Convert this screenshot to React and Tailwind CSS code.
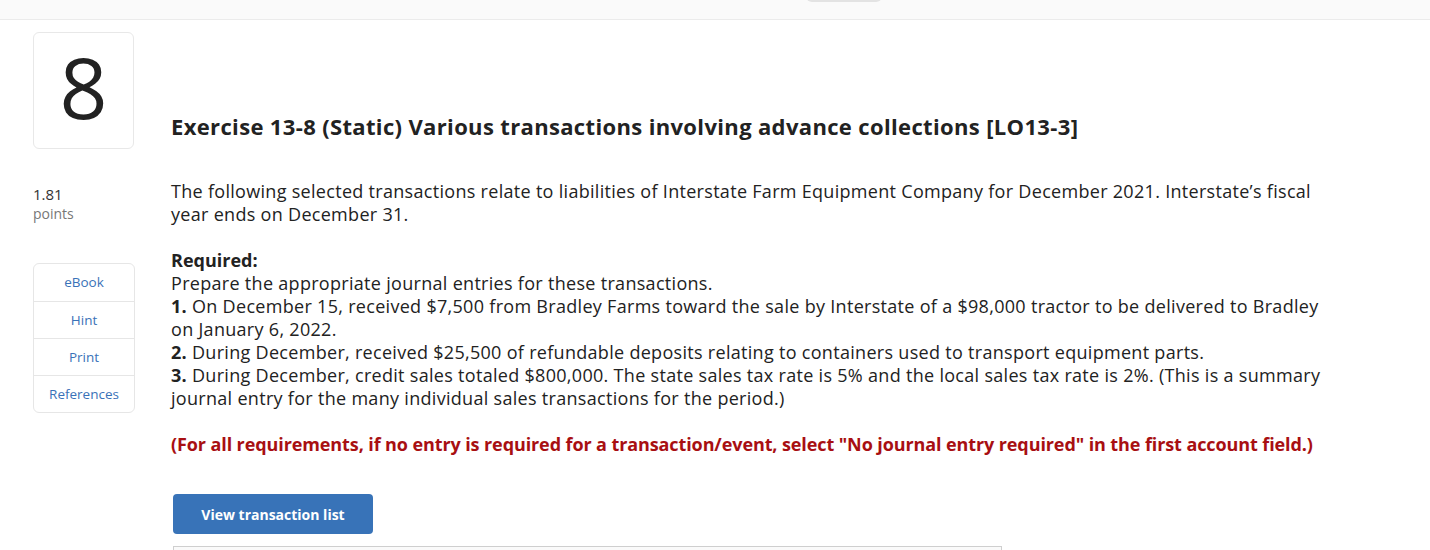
export default function App() {
  const sideLinks = ['eBook', 'Hint', 'Print', 'References'];

  return (
    <div className="min-h-[550px] bg-white font-['Open_Sans',sans-serif] text-[#1d1d1d] overflow-hidden">
      {/* top strip */}
      <div className="relative h-5 bg-[#fafafa] border-b border-[#ebebeb]">
        <div className="absolute left-[806px] top-[-4px] w-[76px] h-[6px] rounded-b-md bg-[#e3e3e3]" />
      </div>

      <div className="pl-[33px] pt-[12px]">
        {/* question number + title */}
        <div className="flex items-end">
          <div className="w-[101px] h-[117px] shrink-0 border border-[#e8e8e8] rounded-md flex items-center justify-center">
            <span className="text-[84px] leading-none text-[#222] font-normal -mt-2">8</span>
          </div>
          <h1 className="ml-[37px] mb-[9px] text-[22px] leading-7 font-bold tracking-[0.35px] text-[#222]">
            Exercise 13-8 (Static) Various transactions involving advance collections [LO13-3]
          </h1>
        </div>

        <div className="flex mt-[31px]">
          {/* left column */}
          <div className="w-[138px] shrink-0">
            <div className="text-[15px] leading-5 text-[#333] mt-[4px]">1.81</div>
            <div className="text-[14px] leading-5 text-[#777]">points</div>

            <div className="mt-[39px] w-[102px] border border-[#e6e6e6] rounded-md text-[13.5px] text-[#3a72b8] text-center">
              {sideLinks.map((l, i) => (
                <div
                  key={l}
                  className={`h-[37px] flex items-center justify-center ${i > 0 ? 'border-t border-[#e6e6e6]' : ''}`}
                >
                  {l}
                </div>
              ))}
            </div>
          </div>

          {/* content */}
          <div className="w-[1170px] text-[18px] leading-[23px] tracking-[0.3px] text-[#222]">
            <p>
              The following selected transactions relate to liabilities of Interstate Farm Equipment Company for December 2021. Interstate’s fiscal year ends on December 31.
            </p>
            <p className="mt-[23px] font-bold tracking-normal">Required:</p>
            <p>Prepare the appropriate journal entries for these transactions.</p>
            <p>
              <b>1.</b> On December 15, received $7,500 from Bradley Farms toward the sale by Interstate of a $98,000 tractor to be delivered to Bradley on January 6, 2022.
            </p>
            <p>
              <b>2.</b> During December, received $25,500 of refundable deposits relating to containers used to transport equipment parts.
            </p>
            <p>
              <b>3.</b> During December, credit sales totaled $800,000. The state sales tax rate is 5% and the local sales tax rate is 2%. (This is a summary journal entry for the many individual sales transactions for the period.)
            </p>
            <p className="mt-[23px] font-bold tracking-[-0.1px] text-[#a80f12]">
              (For all requirements, if no entry is required for a transaction/event, select "No journal entry required" in the first account field.)
            </p>

            <button className="mt-[38px] ml-[2px] w-[200px] h-[40px] rounded bg-[#3873b8] text-white text-[14px] tracking-normal font-bold">
              View transaction list
            </button>

            <div className="mt-[12px] ml-[2px] w-[829px] h-[20px] border border-[#cfcfcf] bg-[#fafafa]" />
          </div>
        </div>
      </div>
    </div>
  );
}
